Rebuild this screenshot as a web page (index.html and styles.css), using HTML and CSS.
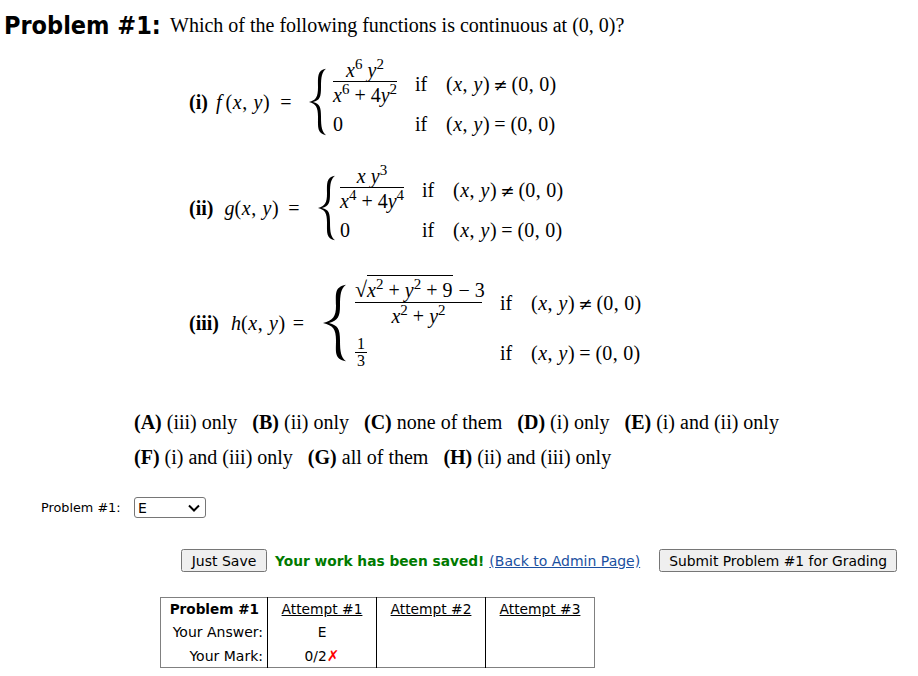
FILE: index.html
```html
<!DOCTYPE html>
<html lang="en">
<head>
<meta charset="utf-8">
<title>Problem #1</title>
<link rel="stylesheet" href="styles.css">
</head>
<body>
<h1 class="question"><span class="qnum">Problem #1:</span> <span class="qtext">Which of the following functions is continuous at (0, 0)?</span></h1>

<div class="formula f1">
  <div class="lhs"><b>(i)</b><i class="fn">f</i><span class="pt">(<i>x</i>, <i>y</i>)</span><span class="eq">=</span></div>
  <svg class="brace" viewBox="0 0 20 78" width="20" height="68" preserveAspectRatio="none"><path d="M19 1C10 3 11 10 11 22C11 33 9 37 2 39C9 41 11 45 11 56C11 68 10 75 19 77C15 73 14 68 14 56C14 45 13 41 6 39C13 37 14 33 14 22C14 10 15 5 19 1Z"/></svg>
  <div class="cases">
    <div class="frac"><span class="num"><i>x</i><sup>6</sup> <i>y</i><sup>2</sup></span><span class="den"><i>x</i><sup>6</sup> + 4<i>y</i><sup>2</sup></span></div>
    <div class="cond"><span class="if">if</span><span class="pt">(<i>x</i>, <i>y</i>)</span><span class="ne">≠</span><span class="zero">(0, 0)</span></div>
    <div class="plain">0</div>
    <div class="cond"><span class="if">if</span><span class="pt">(<i>x</i>, <i>y</i>)</span><span class="same">=</span><span class="zero">(0, 0)</span></div>
  </div>
</div>

<div class="formula f2">
  <div class="lhs"><b>(ii)</b><i class="fn">g</i><span class="pt">(<i>x</i>, <i>y</i>)</span><span class="eq">=</span></div>
  <svg class="brace" viewBox="0 0 20 78" width="20" height="66" preserveAspectRatio="none"><path d="M19 1C10 3 11 10 11 22C11 33 9 37 2 39C9 41 11 45 11 56C11 68 10 75 19 77C15 73 14 68 14 56C14 45 13 41 6 39C13 37 14 33 14 22C14 10 15 5 19 1Z"/></svg>
  <div class="cases">
    <div class="frac"><span class="num"><i>x</i> <i>y</i><sup>3</sup></span><span class="den"><i>x</i><sup>4</sup> + 4<i>y</i><sup>4</sup></span></div>
    <div class="cond"><span class="if">if</span><span class="pt">(<i>x</i>, <i>y</i>)</span><span class="ne">≠</span><span class="zero">(0, 0)</span></div>
    <div class="plain">0</div>
    <div class="cond"><span class="if">if</span><span class="pt">(<i>x</i>, <i>y</i>)</span><span class="same">=</span><span class="zero">(0, 0)</span></div>
  </div>
</div>

<div class="formula f3">
  <div class="lhs"><b>(iii)</b><i class="fn">h</i><span class="pt">(<i>x</i>, <i>y</i>)</span><span class="eq">=</span></div>
  <svg class="brace" viewBox="0 0 26 100" width="26" height="78" preserveAspectRatio="none"><path d="M25 1C13 4 15 13 15 28C15 42 12 47 2 50C12 53 15 58 15 72C15 87 13 96 25 99C20 94 19 87 19 72C19 58 17 53 8 50C17 47 19 42 19 28C19 13 20 6 25 1Z"/></svg>
  <div class="cases">
    <div class="frac"><span class="num"><span class="radical">√</span><span class="radicand"><i>x</i><sup>2</sup> + <i>y</i><sup>2</sup> + 9</span> − 3</span><span class="den"><i>x</i><sup>2</sup> + <i>y</i><sup>2</sup></span></div>
    <div class="cond"><span class="if">if</span><span class="pt">(<i>x</i>, <i>y</i>)</span><span class="ne">≠</span><span class="zero">(0, 0)</span></div>
    <div class="third"><span class="n">1</span><span class="d">3</span></div>
    <div class="cond"><span class="if">if</span><span class="pt">(<i>x</i>, <i>y</i>)</span><span class="same">=</span><span class="zero">(0, 0)</span></div>
  </div>
</div>

<div class="choices">
  <p><b>(A)</b> (iii) only &nbsp; <b>(B)</b> (ii) only &nbsp; <b>(C)</b> none of them &nbsp; <b>(D)</b> (i) only &nbsp; <b>(E)</b> (i) and (ii) only</p>
  <p><b>(F)</b> (i) and (iii) only &nbsp; <b>(G)</b> all of them &nbsp; <b>(H)</b> (ii) and (iii) only</p>
</div>

<div class="answer">
  <label class="answer-label" for="ans">Problem #1:</label>
  <span class="select-wrap">
    <select id="ans" class="answer-select"><option>E</option></select>
    <svg class="chevron" viewBox="0 0 12 8" width="12" height="8"><path d="M1 1.5L6 6.5L11 1.5" fill="none" stroke="#000" stroke-width="2"/></svg>
  </span>
</div>

<div class="actions">
  <button class="btn save" type="button">Just Save</button>
  <span class="saved">Your work has been saved!</span>
  <a class="back" href="#">(Back to Admin Page)</a>
  <button class="btn submit" type="button">Submit Problem #1 for Grading</button>
</div>

<table class="attempts">
  <tr class="r1"><th class="head">Problem #1</th><td><u>Attempt #1</u></td><td><u>Attempt #2</u></td><td><u>Attempt #3</u></td></tr>
  <tr class="r2"><th>Your Answer:</th><td>E</td><td></td><td></td></tr>
  <tr class="r3"><th>Your Mark:</th><td>0/2<span class="cross">✗</span></td><td></td><td></td></tr>
</table>
</body>
</html>
```

FILE: styles.css
```css
html, body { margin: 0; padding: 0; background: #fff; color: #000; }
body { width: 918px; height: 676px; overflow: hidden; font-family: "DejaVu Sans", sans-serif; font-size: 14px; }

.question { margin: 0; padding: 8px 0 0 4px; height: 47px; box-sizing: border-box; display: flex; align-items: flex-start; font-weight: normal; line-height: 35px; }
.qnum { font-family: "DejaVu Sans Condensed", "DejaVu Sans", sans-serif; font-stretch: condensed; font-weight: bold; font-size: 25px; width: 166px; flex: none; white-space: nowrap; }
.qtext { font-family: "Liberation Serif", serif; font-size: 20px; }

.formula { display: flex; align-items: center; font-family: "Liberation Serif", serif; font-size: 20px; line-height: 24px; }
.f1 { margin: 12px 0 0 189px; height: 85px; }
.f2 { margin: 21px 0 0 189px; height: 85px; }
.f3 { margin: 21px 0 0 189px; height: 104px; }

.lhs { flex: none; white-space: nowrap; }
.lhs .pt { letter-spacing: 0.6px; }
.f1 .lhs { width: 118px; }
.f2 .lhs { width: 127px; }
.f3 .lhs { width: 132px; }
.f1 .fn { margin: 0 4px 0 8px; }
.f2 .fn { margin-left: 11px; }
.f3 .fn { margin-left: 12px; }
.eq { display: inline-block; }
.f1 .eq { margin-left: 10px; }
.f2 .eq { margin-left: 9px; }
.f3 .eq { margin-left: 7px; }

.brace { flex: none; }
.f1 .brace { margin-right: 6px; }
.f2 .brace { margin-right: 4px; }
.f3 .brace { margin-right: 8px; }

.cases { display: grid; align-items: center; }
.f1 .cases, .f2 .cases { margin-bottom: 8px; }
.f1 .cases, .f2 .cases { grid-template-columns: 82px auto; grid-template-rows: 50px 30px; }
.f3 .cases { grid-template-columns: 145px auto; grid-template-rows: 58px 42px; }
.f1 .cond:nth-child(2), .f2 .cond:nth-child(2) { padding-top: 4px; }
.f1 .cond:nth-child(4), .f2 .cond:nth-child(4), .plain { padding-top: 2px; }
.f3 .cond:nth-child(2) { padding-top: 2px; }
.f3 .cond:nth-child(4) { padding-top: 2px; }

.frac { display: inline-flex; flex-direction: column; align-items: stretch; text-align: center; justify-self: start; }
.f1 .frac, .f2 .frac { width: 64px; }
.f3 .frac { width: 127px; }
.num { display: block; border-bottom: 1px solid #000; line-height: 21px; height: 21px; white-space: nowrap; }
.den { display: block; white-space: nowrap; line-height: 27px; height: 24px; }
.f3 .num { height: 29px; line-height: 34px; }
.f3 .den { height: 29px; line-height: 26px; }

sup { font-size: 15px; line-height: 0; vertical-align: 8px; }
.radical { font-size: 22px; line-height: 0; }
.radicand { display: inline-block; border-top: 1px solid #000; line-height: 20px; padding: 4px 1px 0 0; }

.cond { white-space: nowrap; }
.if { display: inline-block; width: 31px; }
.cond .pt { letter-spacing: 0.5px; }
.ne { font-family: "DejaVu Sans", sans-serif; font-size: 17px; margin: 0 4px 0 3px; }
.same { margin: 0 5px 0 4px; }
.zero { letter-spacing: 0.3px; }

.third { display: inline-flex; flex-direction: column; width: 12px; text-align: center; font-size: 16px; line-height: 16px; }
.third .n { border-bottom: 1px solid #000; }

.choices { margin: 30px 0 0 134px; font-family: "Liberation Serif", serif; font-size: 20px; line-height: 35px; }
.choices p { margin: 0; white-space: nowrap; }

.answer { margin: 22px 0 0 41px; display: flex; align-items: center; height: 21px; }
.answer-label { font-size: 12.8px; width: 93px; flex: none; }
.select-wrap { position: relative; display: block; width: 72px; height: 21px; }
.answer-select { appearance: none; -webkit-appearance: none; display: block; width: 72px; height: 21px; padding: 0 0 0 3px; background: #fff; color: #000; border: 1px solid #767676; border-radius: 3px; font-family: "DejaVu Sans", sans-serif; font-size: 14px; }
.chevron { position: absolute; right: 6px; top: 7px; pointer-events: none; }

.actions { margin: 31px 0 0 181px; display: flex; align-items: center; height: 22px; white-space: nowrap; }
.btn { font-family: "DejaVu Sans", sans-serif; font-size: 14px; height: 23px; padding: 1px 0 0; box-sizing: border-box; }
.save { width: 86px; }
.saved { margin-left: 8px; padding-top: 2px; color: #007a00; font-weight: bold; font-size: 13.75px; }
.back { margin-left: 5px; padding-top: 2px; color: #1a4fa0; }
.submit { margin-left: 19px; width: 238px; font-size: 13.85px; }

.attempts { margin: 26px 0 0 160px; border-collapse: collapse; border: 1px solid #808080; table-layout: fixed; width: 435px; font-size: 13.8px; }
.attempts th { width: 107px; font-weight: normal; text-align: right; padding: 0 4px 0 0; box-sizing: border-box; font-size: 14px; }
.attempts th.head { font-weight: bold; padding-right: 8px; font-size: 13.6px; }
.attempts td { width: 109px; text-align: center; border-left: 1px solid #000; padding: 0; box-sizing: border-box; }
.r1 th, .r1 td { height: 22px; }
.r2 th, .r2 td { height: 25px; }
.r3 th, .r3 td { height: 23px; }
.cross { color: #ff0000; font-weight: bold; font-size: 15px; }
```
